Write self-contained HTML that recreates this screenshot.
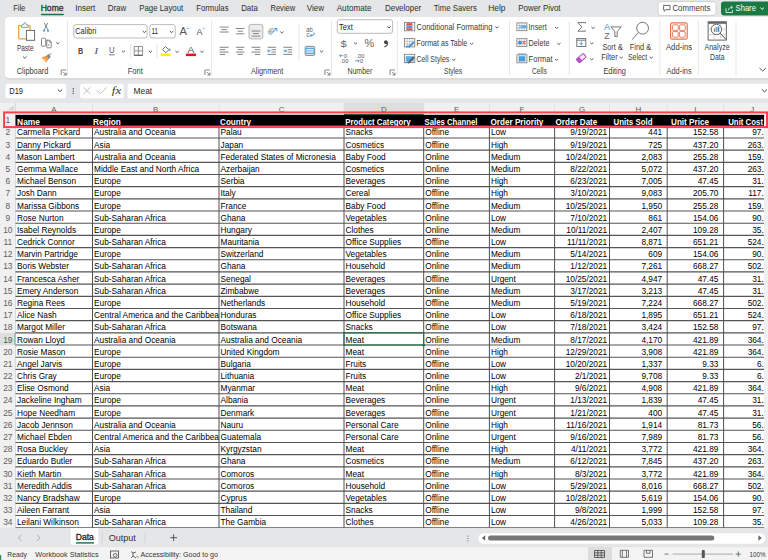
<!DOCTYPE html>
<html><head><meta charset="utf-8"><style>
html,body{margin:0;padding:0;width:768px;height:560px;overflow:hidden;background:#e5e6e8}
svg{display:block;font-family:"Liberation Sans", sans-serif}
</style></head><body>
<svg width="768" height="560" viewBox="0 0 768 560">
<rect x="0.00" y="0.00" width="768.00" height="560.00" fill="#e5e6e8"/>
<text x="13.20" y="10.90" font-size="8.4" fill="#2e2e2e" textLength="12.10" lengthAdjust="spacingAndGlyphs">File</text>
<text x="40.70" y="10.90" font-size="8.4" fill="#2e2e2e" textLength="22.85" lengthAdjust="spacingAndGlyphs" stroke="#333" stroke-width="0.3">Home</text>
<text x="75.20" y="10.90" font-size="8.4" fill="#2e2e2e" textLength="20.10" lengthAdjust="spacingAndGlyphs">Insert</text>
<text x="107.70" y="10.90" font-size="8.4" fill="#2e2e2e" textLength="18.60" lengthAdjust="spacingAndGlyphs">Draw</text>
<text x="139.20" y="10.90" font-size="8.4" fill="#2e2e2e" textLength="44.10" lengthAdjust="spacingAndGlyphs">Page Layout</text>
<text x="196.20" y="10.90" font-size="8.4" fill="#2e2e2e" textLength="32.35" lengthAdjust="spacingAndGlyphs">Formulas</text>
<text x="241.20" y="10.90" font-size="8.4" fill="#2e2e2e" textLength="16.60" lengthAdjust="spacingAndGlyphs">Data</text>
<text x="270.45" y="10.90" font-size="8.4" fill="#2e2e2e" textLength="24.85" lengthAdjust="spacingAndGlyphs">Review</text>
<text x="306.70" y="10.90" font-size="8.4" fill="#2e2e2e" textLength="17.35" lengthAdjust="spacingAndGlyphs">View</text>
<text x="336.70" y="10.90" font-size="8.4" fill="#2e2e2e" textLength="34.85" lengthAdjust="spacingAndGlyphs">Automate</text>
<text x="384.95" y="10.90" font-size="8.4" fill="#2e2e2e" textLength="36.35" lengthAdjust="spacingAndGlyphs">Developer</text>
<text x="433.70" y="10.90" font-size="8.4" fill="#2e2e2e" textLength="43.10" lengthAdjust="spacingAndGlyphs">Time Savers</text>
<text x="488.20" y="10.90" font-size="8.4" fill="#2e2e2e" textLength="17.35" lengthAdjust="spacingAndGlyphs">Help</text>
<text x="518.20" y="10.90" font-size="8.4" fill="#2e2e2e" textLength="42.35" lengthAdjust="spacingAndGlyphs">Power Pivot</text>
<rect x="40.80" y="13.70" width="23.10" height="1.50" fill="#1e7145" rx="0.7"/>
<rect x="658.00" y="1.50" width="58.00" height="14.00" fill="#ffffff" rx="3" stroke="#c9c9c9" stroke-width="0.8"/>
<text x="672.40" y="11.00" font-size="8.4" fill="#3b3b3b" textLength="38.00" lengthAdjust="spacingAndGlyphs">Comments</text>
<path d="M663.6 5.4h6.4v4.3h-4.2l-1.6 1.5v-1.5h-0.6z" fill="none" stroke="#444" stroke-width="0.8"/>
<rect x="721.00" y="1.50" width="52.00" height="14.00" fill="#1a7a43" rx="3"/>
<text x="735.60" y="11.00" font-size="8.4" fill="#ffffff" textLength="20.30" lengthAdjust="spacingAndGlyphs">Share</text>
<path d="M726 8.3v4.2h6.4v-2.6" fill="none" stroke="#fff" stroke-width="0.8"/><path d="M728.3 10.3c0.3-2 1.6-2.8 3.6-2.8M731 5.8l1.5 1.4-1.5 1.4" fill="none" stroke="#fff" stroke-width="0.8"/>
<path d="M760.4 7.6l1.8 1.7 1.8-1.7" fill="none" stroke="#fff" stroke-width="1"/>
<rect x="5.00" y="18.40" width="775.00" height="61.20" fill="#d2d2d2" rx="4"/>
<rect x="5.00" y="17.30" width="775.00" height="61.20" fill="#e1e1e1" rx="4"/>
<rect x="5.00" y="17.00" width="775.00" height="60.90" fill="#ffffff" rx="4"/>
<line x1="67.50" y1="21.00" x2="67.50" y2="75.50" stroke="#e1e1e1" stroke-width="0.8"/>
<line x1="211.60" y1="21.00" x2="211.60" y2="75.50" stroke="#e1e1e1" stroke-width="0.8"/>
<line x1="331.50" y1="21.00" x2="331.50" y2="75.50" stroke="#e1e1e1" stroke-width="0.8"/>
<line x1="397.40" y1="21.00" x2="397.40" y2="75.50" stroke="#e1e1e1" stroke-width="0.8"/>
<line x1="509.50" y1="21.00" x2="509.50" y2="75.50" stroke="#e1e1e1" stroke-width="0.8"/>
<line x1="569.20" y1="21.00" x2="569.20" y2="75.50" stroke="#e1e1e1" stroke-width="0.8"/>
<line x1="659.80" y1="21.00" x2="659.80" y2="75.50" stroke="#e1e1e1" stroke-width="0.8"/>
<line x1="698.30" y1="21.00" x2="698.30" y2="75.50" stroke="#e1e1e1" stroke-width="0.8"/>
<line x1="736.00" y1="21.00" x2="736.00" y2="75.50" stroke="#e1e1e1" stroke-width="0.8"/>
<text x="16.80" y="74.40" font-size="8.2" fill="#3b3b3b" textLength="31.50" lengthAdjust="spacingAndGlyphs">Clipboard</text>
<text x="127.70" y="74.40" font-size="8.2" fill="#3b3b3b" textLength="15.20" lengthAdjust="spacingAndGlyphs">Font</text>
<text x="251.00" y="74.40" font-size="8.2" fill="#3b3b3b" textLength="32.30" lengthAdjust="spacingAndGlyphs">Alignment</text>
<text x="347.45" y="74.40" font-size="8.2" fill="#3b3b3b" textLength="24.85" lengthAdjust="spacingAndGlyphs">Number</text>
<text x="444.00" y="74.40" font-size="8.2" fill="#3b3b3b" textLength="18.10" lengthAdjust="spacingAndGlyphs">Styles</text>
<text x="532.00" y="74.40" font-size="8.2" fill="#3b3b3b" textLength="14.80" lengthAdjust="spacingAndGlyphs">Cells</text>
<text x="603.40" y="74.40" font-size="8.2" fill="#3b3b3b" textLength="22.60" lengthAdjust="spacingAndGlyphs">Editing</text>
<text x="666.50" y="74.40" font-size="8.2" fill="#3b3b3b" textLength="25.10" lengthAdjust="spacingAndGlyphs">Add-ins</text>
<path d="M61.2 75V70h5M63.2 72l3 3M63.7 75h2.5v-2.5" fill="none" stroke="#555" stroke-width="0.7"/>
<path d="M204.9 75V70h5M206.9 72l3 3M207.4 75h2.5v-2.5" fill="none" stroke="#555" stroke-width="0.7"/>
<path d="M324.9 75V70h5M326.9 72l3 3M327.4 75h2.5v-2.5" fill="none" stroke="#555" stroke-width="0.7"/>
<path d="M390.0 75V70h5M392.0 72l3 3M392.5 75h2.5v-2.5" fill="none" stroke="#555" stroke-width="0.7"/>
<rect x="18.7" y="25.6" width="11.4" height="13.3" rx="0.8" fill="#fafafa" stroke="#f0a030" stroke-width="1.2"/>
<path d="M21.6 27.4v-1.6q0-1.3 1.3-1.3h0.7q0.2-2 1.3-2t1.3 2h0.7q1.3 0 1.3 1.3v1.6z" fill="#f2f2f2" stroke="#8a8a8a" stroke-width="0.8"/>
<rect x="26.4" y="30.4" width="8.2" height="9.9" fill="#ffffff" stroke="#5e5e5e" stroke-width="0.9"/>
<text x="16.90" y="50.60" font-size="8.7" fill="#3a3a3a" textLength="16.60" lengthAdjust="spacingAndGlyphs">Paste</text>
<path d="M23 56.6l1.8 1.7 1.8-1.7" fill="none" stroke="#505050" stroke-width="0.95"/>
<path d="M44.2 22.8l3.6 7M47.8 22.8l-3.6 7" stroke="#6a6a6a" stroke-width="0.8"/>
<circle cx="44.1" cy="30.7" r="1.15" fill="#4a9fe0"/><circle cx="48" cy="30.7" r="1.15" fill="#4a9fe0"/>
<rect x="41.5" y="38.2" width="4.2" height="8" rx="1" fill="none" stroke="#666" stroke-width="0.8"/>
<path d="M46.8 40.2h2.8l1.6 1.7v5.3q0 0.6-0.6 0.6h-3.2q-0.6 0-0.6-0.6v-6.4q0-0.6 0.6-0.6z" fill="#fff" stroke="#666" stroke-width="0.8"/><path d="M49.4 40.3v1.8h1.7" fill="none" stroke="#666" stroke-width="0.7"/><rect x="48" y="44.3" width="1.3" height="1.3" fill="#999"/>
<path d="M56.2 42.4l1.6 1.5 1.6-1.5" fill="none" stroke="#505050" stroke-width="0.95"/>
<path d="M41.4 57.8l5.2-2.2 1.6 3.6-1.8 3.4z" fill="#f29a36"/><path d="M43.5 58.5l2.8 2.2" stroke="#fff" stroke-width="0.7"/>
<path d="M46.6 55.6l2.5-1.8 1.6 3.5-2.5 1.9z" fill="#8a8a8a"/><path d="M49.7 54.6l1.6-1.2" stroke="#666" stroke-width="0.9"/>
<rect x="73.8" y="24.6" width="73.3" height="13.4" rx="2.2" fill="#fff" stroke="#a9a9a9" stroke-width="0.8"/>
<text x="75.20" y="34.10" font-size="8.3" fill="#1f1f1f" textLength="21.20" lengthAdjust="spacingAndGlyphs">Calibri</text>
<path d="M142.7 31l1.7 1.6 1.7-1.6" fill="none" stroke="#444" stroke-width="0.95"/>
<rect x="149.8" y="24.6" width="25.4" height="13.4" rx="2.2" fill="#fff" stroke="#a9a9a9" stroke-width="0.8"/>
<text x="151.50" y="34.10" font-size="8.3" fill="#1f1f1f" textLength="6.60" lengthAdjust="spacingAndGlyphs">11</text>
<path d="M169.9 31l1.7 1.6 1.7-1.6" fill="none" stroke="#444" stroke-width="0.95"/>
<text x="179.60" y="34.50" font-size="10.2" fill="#555" textLength="7.40" lengthAdjust="spacingAndGlyphs">A</text>
<path d="M186.8 29l1.1-1.1 1.1 1.1" fill="none" stroke="#4a9fe0" stroke-width="0.8"/>
<text x="196.50" y="34.50" font-size="8.5" fill="#555" textLength="6.00" lengthAdjust="spacingAndGlyphs">A</text>
<path d="M202.6 27.8l1.1 1.1 1.1-1.1" fill="none" stroke="#4a9fe0" stroke-width="0.8"/>
<text x="78.00" y="53.60" font-size="8.8" fill="#444" textLength="5.20" lengthAdjust="spacingAndGlyphs" font-weight="bold">B</text>
<text x="94.30" y="53.60" font-size="9" fill="#555" textLength="4.00" lengthAdjust="spacingAndGlyphs" font-family="Liberation Serif" font-style="italic">I</text>
<text x="109.00" y="53.10" font-size="8.2" fill="#555" textLength="5.60" lengthAdjust="spacingAndGlyphs">U</text>
<line x1="109.00" y1="54.80" x2="114.60" y2="54.80" stroke="#555" stroke-width="0.8"/>
<path d="M121.8 50.6l1.6 1.5 1.6-1.5" fill="none" stroke="#505050" stroke-width="0.95"/>
<line x1="130.60" y1="44.00" x2="130.60" y2="58.00" stroke="#dcdcdc" stroke-width="0.8"/>
<path d="M134.2 46.5h8.4v8.8h-8.4zM138.4 46.5v8.8M134.2 50.9h8.4" fill="none" stroke="#777" stroke-width="0.8"/><path d="M134.2 55.3h8.4" stroke="#555" stroke-width="1"/>
<path d="M148.8 50.8l1.6 1.5 1.6-1.5" fill="none" stroke="#505050" stroke-width="0.95"/>
<line x1="156.90" y1="44.00" x2="156.90" y2="58.00" stroke="#dcdcdc" stroke-width="0.8"/>
<path d="M162.5 49.5l3-3 3.3 3.3-3 3z" fill="none" stroke="#555" stroke-width="0.8"/><path d="M169.3 48.5q1 1.5 0.5 2.6" stroke="#2a7fd0" stroke-width="1" fill="none"/>
<rect x="160.80" y="53.60" width="10.10" height="2.50" fill="#fff200"/>
<path d="M175.5 51l1.6 1.5 1.6-1.5" fill="none" stroke="#505050" stroke-width="0.95"/>
<text x="187.60" y="52.90" font-size="9" fill="#555" textLength="6.80" lengthAdjust="spacingAndGlyphs">A</text>
<rect x="185.90" y="53.60" width="10.10" height="2.50" fill="#e81123"/>
<path d="M200.4 51l1.6 1.5 1.6-1.5" fill="none" stroke="#505050" stroke-width="0.95"/>
<line x1="219.70" y1="27.10" x2="228.60" y2="27.10" stroke="#777" stroke-width="0.9"/>
<line x1="221.30" y1="29.60" x2="227.00" y2="29.60" stroke="#777" stroke-width="0.9"/>
<line x1="219.70" y1="32.00" x2="228.60" y2="32.00" stroke="#777" stroke-width="0.9"/>
<line x1="235.90" y1="28.50" x2="244.40" y2="28.50" stroke="#777" stroke-width="0.9"/>
<line x1="237.50" y1="31.20" x2="242.80" y2="31.20" stroke="#777" stroke-width="0.9"/>
<line x1="235.90" y1="33.80" x2="244.40" y2="33.80" stroke="#777" stroke-width="0.9"/>
<rect x="249" y="24.4" width="13.8" height="14.5" rx="2.2" fill="#ececec" stroke="#a3a3a3" stroke-width="0.8"/>
<line x1="251.50" y1="31.00" x2="260.40" y2="31.00" stroke="#777" stroke-width="0.9"/>
<line x1="253.10" y1="33.50" x2="258.80" y2="33.50" stroke="#777" stroke-width="0.9"/>
<line x1="251.50" y1="36.10" x2="260.40" y2="36.10" stroke="#777" stroke-width="0.9"/>
<text x="267.20" y="33.00" font-size="6" fill="#666" transform="rotate(-35 270 31)">ab</text>
<path d="M270 35.3l6.8-6.8M274 28.5h2.8v2.8" fill="none" stroke="#3a8fd8" stroke-width="0.9"/>
<path d="M280.2 31.6l1.6 1.5 1.6-1.5" fill="none" stroke="#505050" stroke-width="0.95"/>
<line x1="219.70" y1="47.30" x2="228.60" y2="47.30" stroke="#777" stroke-width="0.9"/>
<line x1="219.70" y1="49.70" x2="225.22" y2="49.70" stroke="#777" stroke-width="0.9"/>
<line x1="219.70" y1="52.10" x2="228.60" y2="52.10" stroke="#777" stroke-width="0.9"/>
<line x1="219.70" y1="54.40" x2="225.22" y2="54.40" stroke="#777" stroke-width="0.9"/>
<line x1="235.90" y1="47.30" x2="244.40" y2="47.30" stroke="#777" stroke-width="0.9"/>
<line x1="237.50" y1="49.70" x2="242.80" y2="49.70" stroke="#777" stroke-width="0.9"/>
<line x1="235.90" y1="52.10" x2="244.40" y2="52.10" stroke="#777" stroke-width="0.9"/>
<line x1="237.50" y1="54.40" x2="242.80" y2="54.40" stroke="#777" stroke-width="0.9"/>
<line x1="251.50" y1="47.30" x2="260.30" y2="47.30" stroke="#777" stroke-width="0.9"/>
<line x1="254.84" y1="49.70" x2="260.30" y2="49.70" stroke="#777" stroke-width="0.9"/>
<line x1="251.50" y1="52.10" x2="260.30" y2="52.10" stroke="#777" stroke-width="0.9"/>
<line x1="254.84" y1="54.40" x2="260.30" y2="54.40" stroke="#777" stroke-width="0.9"/>
<line x1="267.60" y1="47.30" x2="276.00" y2="47.30" stroke="#777" stroke-width="0.9"/>
<line x1="271.50" y1="49.70" x2="276.00" y2="49.70" stroke="#777" stroke-width="0.9"/>
<line x1="271.50" y1="52.10" x2="276.00" y2="52.10" stroke="#777" stroke-width="0.9"/>
<line x1="267.60" y1="54.40" x2="276.00" y2="54.40" stroke="#777" stroke-width="0.9"/>
<path d="M267.6 50.9h3.2M269 49.4l-1.5 1.5 1.5 1.5" fill="none" stroke="#3a8fd8" stroke-width="0.9"/>
<line x1="283.30" y1="47.30" x2="292.10" y2="47.30" stroke="#777" stroke-width="0.9"/>
<line x1="287.60" y1="49.70" x2="292.10" y2="49.70" stroke="#777" stroke-width="0.9"/>
<line x1="287.60" y1="52.10" x2="292.10" y2="52.10" stroke="#777" stroke-width="0.9"/>
<line x1="283.30" y1="54.40" x2="292.10" y2="54.40" stroke="#777" stroke-width="0.9"/>
<path d="M283.3 50.9h3.2M285 49.4l1.5 1.5-1.5 1.5" fill="none" stroke="#3a8fd8" stroke-width="0.9"/>
<line x1="298.90" y1="24.00" x2="298.90" y2="61.00" stroke="#e1e1e1" stroke-width="0.8"/>
<text x="306.20" y="31.50" font-size="6.4" fill="#666" textLength="6.50" lengthAdjust="spacingAndGlyphs">ab</text>
<text x="306.40" y="36.60" font-size="6.4" fill="#666">c</text>
<path d="M314.3 32.5q0.5 3-2.2 3h-1.8M311.4 34.2l-1.3 1.3 1.3 1.3" fill="none" stroke="#3a8fd8" stroke-width="0.9"/>
<rect x="305.2" y="46.4" width="9.5" height="9" rx="1" fill="#fff" stroke="#666" stroke-width="0.8"/>
<rect x="305.60" y="47.60" width="8.70" height="6.60" fill="#5aaae6"/>
<rect x="306.60" y="49.20" width="6.70" height="3.40" fill="#ffffff"/>
<path d="M307.2 50.9h5.5" stroke="#3a8fd8" stroke-width="0.9"/>
<path d="M320 50.6l1.6 1.5 1.6-1.5" fill="none" stroke="#505050" stroke-width="0.95"/>
<rect x="337.2" y="19.7" width="55.4" height="13.6" rx="2.2" fill="#fff" stroke="#a9a9a9" stroke-width="0.8"/>
<text x="339.10" y="29.50" font-size="8.3" fill="#1f1f1f" textLength="13.60" lengthAdjust="spacingAndGlyphs">Text</text>
<path d="M387.3 26.4l1.7 1.6 1.7-1.6" fill="none" stroke="#444" stroke-width="0.95"/>
<text x="340.60" y="47.20" font-size="9.6" fill="#666" textLength="6.20" lengthAdjust="spacingAndGlyphs">$</text>
<path d="M354 42.5l1.6 1.5 1.6-1.5" fill="none" stroke="#505050" stroke-width="0.95"/>
<text x="364.60" y="47.20" font-size="10" fill="#666" textLength="9.70" lengthAdjust="spacingAndGlyphs">%</text>
<circle cx="385.9" cy="42.2" r="1.9" fill="#444"/><path d="M387.6 42.6q0.2 3-3.2 4.4" fill="none" stroke="#444" stroke-width="1.2"/>
<text x="344.00" y="57.70" font-size="5.6" fill="#555">0</text>
<text x="340.50" y="62.80" font-size="5.6" fill="#555">.00</text>
<path d="M339.5 55.7h4M341 54.3l-1.5 1.4 1.5 1.4" fill="none" stroke="#3a8fd8" stroke-width="0.8"/>
<text x="356.50" y="57.70" font-size="5.6" fill="#555">.00</text>
<text x="360.00" y="62.80" font-size="5.6" fill="#555">0</text>
<path d="M355 60.8h4.3M357.8 59.4l1.5 1.4-1.5 1.4" fill="none" stroke="#3a8fd8" stroke-width="0.8"/>
<rect x="404.5" y="22.5" width="10.3" height="8.3" fill="#fff" stroke="#777" stroke-width="0.8"/>
<line x1="404.50" y1="25.27" x2="414.80" y2="25.27" stroke="#aaa" stroke-width="0.6"/>
<line x1="404.50" y1="28.03" x2="414.80" y2="28.03" stroke="#aaa" stroke-width="0.6"/>
<line x1="407.07" y1="22.50" x2="407.07" y2="30.80" stroke="#aaa" stroke-width="0.6"/>
<line x1="409.65" y1="22.50" x2="409.65" y2="30.80" stroke="#aaa" stroke-width="0.6"/>
<line x1="412.23" y1="22.50" x2="412.23" y2="30.80" stroke="#aaa" stroke-width="0.6"/>
<rect x="406.50" y="23.20" width="5.60" height="2.20" fill="#e8454a"/>
<rect x="406.50" y="25.90" width="5.60" height="2.20" fill="#4a9fe0"/>
<rect x="406.50" y="28.40" width="5.60" height="1.80" fill="#e8454a"/>
<text x="416.50" y="29.60" font-size="8.8" fill="#3a3a3a" textLength="76.00" lengthAdjust="spacingAndGlyphs">Conditional Formatting</text>
<path d="M495.4 26.6l1.6 1.5 1.6-1.5" fill="none" stroke="#505050" stroke-width="0.95"/>
<rect x="404.5" y="38.6" width="10.3" height="8.3" fill="#fff" stroke="#777" stroke-width="0.8"/>
<line x1="404.50" y1="41.37" x2="414.80" y2="41.37" stroke="#aaa" stroke-width="0.6"/>
<line x1="404.50" y1="44.13" x2="414.80" y2="44.13" stroke="#aaa" stroke-width="0.6"/>
<line x1="407.07" y1="38.60" x2="407.07" y2="46.90" stroke="#aaa" stroke-width="0.6"/>
<line x1="409.65" y1="38.60" x2="409.65" y2="46.90" stroke="#aaa" stroke-width="0.6"/>
<line x1="412.23" y1="38.60" x2="412.23" y2="46.90" stroke="#aaa" stroke-width="0.6"/>
<path d="M408 46.8l5.5-5.5 1.2 1.2-5.5 5.5z" fill="#3a8fd8"/><path d="M406 47.2q1.5-0.2 2.5-1.5" stroke="#3a8fd8" stroke-width="1.2" fill="none"/>
<text x="416.50" y="45.90" font-size="8.8" fill="#3a3a3a" textLength="50.80" lengthAdjust="spacingAndGlyphs">Format as Table</text>
<path d="M470 43l1.6 1.5 1.6-1.5" fill="none" stroke="#505050" stroke-width="0.95"/>
<rect x="404.5" y="54.3" width="10.3" height="8.2" fill="#fff" stroke="#777" stroke-width="0.8"/>
<rect x="405.70" y="56.20" width="8.00" height="5.20" fill="#5aaae6"/>
<path d="M407.5 62.5l6-6 1.2 1.2-6 6z" fill="#555"/><path d="M405.5 63q1.6-0.2 2.5-1.5" stroke="#3a8fd8" stroke-width="1.2" fill="none"/>
<text x="416.50" y="61.50" font-size="8.8" fill="#3a3a3a" textLength="32.70" lengthAdjust="spacingAndGlyphs">Cell Styles</text>
<path d="M452.2 59l1.6 1.5 1.6-1.5" fill="none" stroke="#505050" stroke-width="0.95"/>
<rect x="516.9" y="22.9" width="10" height="7.8" fill="#fff" stroke="#777" stroke-width="0.8"/>
<line x1="516.90" y1="25.50" x2="526.90" y2="25.50" stroke="#aaa" stroke-width="0.6"/>
<line x1="516.90" y1="28.10" x2="526.90" y2="28.10" stroke="#aaa" stroke-width="0.6"/>
<line x1="519.40" y1="22.90" x2="519.40" y2="30.70" stroke="#aaa" stroke-width="0.6"/>
<line x1="521.90" y1="22.90" x2="521.90" y2="30.70" stroke="#aaa" stroke-width="0.6"/>
<line x1="524.40" y1="22.90" x2="524.40" y2="30.70" stroke="#aaa" stroke-width="0.6"/>
<rect x="518.00" y="25.50" width="8.80" height="2.60" fill="#5aaae6"/>
<path d="M517.5 26.8h4M519 25.4l-1.5 1.4 1.5 1.4" fill="none" stroke="#fff" stroke-width="0.7"/>
<text x="528.60" y="30.10" font-size="8.8" fill="#3a3a3a" textLength="18.20" lengthAdjust="spacingAndGlyphs">Insert</text>
<path d="M555 27l1.6 1.5 1.6-1.5" fill="none" stroke="#505050" stroke-width="0.95"/>
<rect x="516.9" y="38.7" width="10" height="7.8" fill="#fff" stroke="#777" stroke-width="0.8"/>
<line x1="516.90" y1="41.30" x2="526.90" y2="41.30" stroke="#aaa" stroke-width="0.6"/>
<line x1="516.90" y1="43.90" x2="526.90" y2="43.90" stroke="#aaa" stroke-width="0.6"/>
<line x1="519.40" y1="38.70" x2="519.40" y2="46.50" stroke="#aaa" stroke-width="0.6"/>
<line x1="521.90" y1="38.70" x2="521.90" y2="46.50" stroke="#aaa" stroke-width="0.6"/>
<line x1="524.40" y1="38.70" x2="524.40" y2="46.50" stroke="#aaa" stroke-width="0.6"/>
<circle cx="520" cy="42.6" r="1.9" fill="#3a8fd8"/><path d="M522.6 41l2.9 3.2M525.5 41l-2.9 3.2" stroke="#e8454a" stroke-width="0.9"/>
<text x="528.60" y="45.90" font-size="8.8" fill="#3a3a3a" textLength="20.90" lengthAdjust="spacingAndGlyphs">Delete</text>
<path d="M557.4 43l1.6 1.5 1.6-1.5" fill="none" stroke="#505050" stroke-width="0.95"/>
<rect x="516.9" y="54.8" width="10" height="8" fill="#fff" stroke="#777" stroke-width="0.8"/>
<line x1="516.90" y1="57.47" x2="526.90" y2="57.47" stroke="#aaa" stroke-width="0.6"/>
<line x1="516.90" y1="60.13" x2="526.90" y2="60.13" stroke="#aaa" stroke-width="0.6"/>
<line x1="519.40" y1="54.80" x2="519.40" y2="62.80" stroke="#aaa" stroke-width="0.6"/>
<line x1="521.90" y1="54.80" x2="521.90" y2="62.80" stroke="#aaa" stroke-width="0.6"/>
<line x1="524.40" y1="54.80" x2="524.40" y2="62.80" stroke="#aaa" stroke-width="0.6"/>
<rect x="518.80" y="56.20" width="6.40" height="5.20" fill="#4a9fe0"/>
<line x1="518.00" y1="54.00" x2="526.00" y2="54.00" stroke="#3a8fd8" stroke-width="0.8"/>
<text x="528.60" y="61.50" font-size="8.8" fill="#3a3a3a" textLength="23.90" lengthAdjust="spacingAndGlyphs">Format</text>
<path d="M555 59l1.6 1.5 1.6-1.5" fill="none" stroke="#505050" stroke-width="0.95"/>
<path d="M585.5 23.5v-0.9h-7.6l4 4.3-4 4.3h7.6v-0.9" fill="none" stroke="#666" stroke-width="0.9"/>
<path d="M591.4 27l1.6 1.5 1.6-1.5" fill="none" stroke="#505050" stroke-width="0.95"/>
<rect x="576.8" y="38.6" width="9" height="7.8" fill="#fff" stroke="#666" stroke-width="0.9"/><path d="M576.8 40.2h9" stroke="#666" stroke-width="0.9"/>
<path d="M581.3 41.3v3.4M579.7 43.2l1.6 1.6 1.6-1.6" fill="none" stroke="#3a8fd8" stroke-width="0.9"/>
<path d="M590.2 42.5l1.6 1.5 1.6-1.5" fill="none" stroke="#505050" stroke-width="0.95"/>
<g transform="rotate(-40 581.3 58.1)"><rect x="576.6" y="55.7" width="9.4" height="4.8" rx="1.1" fill="#f6e6f9" stroke="#b14fc5" stroke-width="1"/><rect x="576.6" y="55.7" width="3.8" height="4.8" rx="1.1" fill="#b14fc5"/></g>
<path d="M590.2 58.4l1.6 1.5 1.6-1.5" fill="none" stroke="#505050" stroke-width="0.95"/>
<text x="604.10" y="29.80" font-size="9" fill="#3a8fd8" textLength="6.00" lengthAdjust="spacingAndGlyphs">A</text>
<text x="604.30" y="38.80" font-size="9" fill="#666" textLength="5.40" lengthAdjust="spacingAndGlyphs">Z</text>
<path d="M610.9 26.9h10.3l-4 4.8v4.8h-2.3v-4.8z" fill="none" stroke="#666" stroke-width="0.9"/>
<text x="602.40" y="49.90" font-size="8.3" fill="#3a3a3a" textLength="20.40" lengthAdjust="spacingAndGlyphs">Sort &amp;</text>
<text x="601.20" y="59.60" font-size="8.3" fill="#3a3a3a" textLength="16.50" lengthAdjust="spacingAndGlyphs">Filter</text>
<path d="M619.6 56.8l1.6 1.5 1.6-1.5" fill="none" stroke="#505050" stroke-width="0.95"/>
<circle cx="642.6" cy="28.2" r="5.9" fill="none" stroke="#666" stroke-width="0.9"/><path d="M638.4 32.4l-6.2 7.3" stroke="#666" stroke-width="0.9"/>
<text x="629.80" y="49.90" font-size="8.3" fill="#3a3a3a" textLength="21.40" lengthAdjust="spacingAndGlyphs">Find &amp;</text>
<text x="627.90" y="59.60" font-size="8.3" fill="#3a3a3a" textLength="19.30" lengthAdjust="spacingAndGlyphs">Select</text>
<path d="M649.6 56.8l1.6 1.5 1.6-1.5" fill="none" stroke="#505050" stroke-width="0.95"/>
<rect x="670.6" y="22.8" width="16.6" height="16.4" rx="1.8" fill="#fff" stroke="#e8734f" stroke-width="1.2"/>
<rect x="672.6" y="24.8" width="5.6" height="5.6" rx="0.6" fill="#fff" stroke="#e8734f" stroke-width="0.9"/>
<rect x="679.6" y="24.8" width="5.6" height="5.6" rx="0.6" fill="#fff" stroke="#e8734f" stroke-width="0.9"/>
<rect x="672.6" y="31.6" width="5.6" height="5.6" rx="0.6" fill="#fff" stroke="#e8734f" stroke-width="0.9"/>
<rect x="679.6" y="31.6" width="5.6" height="5.6" rx="0.6" fill="#fff" stroke="#e8734f" stroke-width="0.9"/>
<text x="666.00" y="49.70" font-size="8.3" fill="#3a3a3a" textLength="26.00" lengthAdjust="spacingAndGlyphs">Add-ins</text>
<rect x="708.1" y="21.8" width="18.2" height="18.3" fill="#fff" stroke="#555" stroke-width="0.9"/>
<rect x="708.10" y="21.80" width="18.20" height="2.00" fill="#666"/>
<line x1="714.20" y1="24.00" x2="714.20" y2="40.00" stroke="#bbb" stroke-width="0.6"/>
<line x1="720.30" y1="24.00" x2="720.30" y2="40.00" stroke="#bbb" stroke-width="0.6"/>
<line x1="708.00" y1="29.00" x2="726.30" y2="29.00" stroke="#bbb" stroke-width="0.6"/>
<line x1="708.00" y1="34.50" x2="726.30" y2="34.50" stroke="#bbb" stroke-width="0.6"/>
<circle cx="716.4" cy="29.4" r="5.2" fill="#fff" stroke="#555" stroke-width="0.9"/><path d="M720.2 33.2l6 6.4" stroke="#555" stroke-width="1"/>
<rect x="713.80" y="28.50" width="1.20" height="3.40" fill="#888"/>
<rect x="715.60" y="27.00" width="1.20" height="4.90" fill="#888"/>
<rect x="717.50" y="26.50" width="1.80" height="5.40" fill="#3a8fd8"/>
<text x="704.40" y="49.70" font-size="8.3" fill="#3a3a3a" textLength="25.40" lengthAdjust="spacingAndGlyphs">Analyze</text>
<text x="710.00" y="60.10" font-size="8.3" fill="#3a3a3a" textLength="14.50" lengthAdjust="spacingAndGlyphs">Data</text>
<path d="M759.5 68l3.2 3 3.2-3" fill="none" stroke="#444" stroke-width="0.9"/>
<rect x="5.50" y="83.80" width="60.75" height="14.40" fill="#ffffff" rx="2.5"/>
<text x="9.20" y="93.80" font-size="8.3" fill="#1f1f1f" textLength="13.90" lengthAdjust="spacingAndGlyphs">D19</text>
<path d="M57.8 89.5l2.2 2.1 2.2-2.1" fill="none" stroke="#444" stroke-width="1"/>
<rect x="72.70" y="88.10" width="1.20" height="1.20" fill="#4a4a4a"/>
<rect x="72.70" y="90.50" width="1.20" height="1.20" fill="#4a4a4a"/>
<rect x="72.70" y="92.90" width="1.20" height="1.20" fill="#4a4a4a"/>
<rect x="80.00" y="83.80" width="43.75" height="14.40" fill="#ffffff" rx="2.5"/>
<path d="M83.4 87.3l7.2 6.8M90.6 87.3l-7.2 6.8" stroke="#b0b0b0" stroke-width="0.8"/>
<path d="M97 90.3l3.4 3.4 6.2-6.3" fill="none" stroke="#b0b0b0" stroke-width="0.8"/>
<text x="111.80" y="93.60" font-size="10.5" fill="#3a3a3a" textLength="9.40" lengthAdjust="spacingAndGlyphs" font-family="Liberation Serif" font-style="italic">fx</text>
<rect x="127.50" y="83.80" width="650.00" height="14.40" fill="#ffffff" rx="2.5"/>
<text x="133.60" y="93.80" font-size="8.3" fill="#1f1f1f" textLength="18.60" lengthAdjust="spacingAndGlyphs">Meat</text>
<path d="M762 89.5l2.5 2.4 2.5-2.4" fill="none" stroke="#444" stroke-width="1"/>
<rect x="0.00" y="103.00" width="764.20" height="11.00" fill="#f0f0f0"/>
<rect x="0.00" y="103.00" width="15.50" height="424.72" fill="#f0f0f0"/>
<rect x="15.50" y="113.60" width="748.70" height="414.12" fill="#ffffff"/>
<rect x="344.00" y="103.00" width="79.70" height="10.60" fill="#dedede"/>
<line x1="344.00" y1="114.40" x2="423.70" y2="114.40" stroke="#217346" stroke-width="1.2"/>
<rect x="0.00" y="332.84" width="15.50" height="12.18" fill="#dedede"/>
<line x1="15.30" y1="332.84" x2="15.30" y2="345.02" stroke="#217346" stroke-width="1.2"/>
<path d="M13.7 105.4V110.3H7.4z" fill="#d3d3d3"/>
<line x1="92.50" y1="104.00" x2="92.50" y2="113.60" stroke="#dadada" stroke-width="0.7"/>
<line x1="219.00" y1="104.00" x2="219.00" y2="113.60" stroke="#dadada" stroke-width="0.7"/>
<line x1="344.00" y1="104.00" x2="344.00" y2="113.60" stroke="#dadada" stroke-width="0.7"/>
<line x1="423.70" y1="104.00" x2="423.70" y2="113.60" stroke="#dadada" stroke-width="0.7"/>
<line x1="489.40" y1="104.00" x2="489.40" y2="113.60" stroke="#dadada" stroke-width="0.7"/>
<line x1="554.60" y1="104.00" x2="554.60" y2="113.60" stroke="#dadada" stroke-width="0.7"/>
<line x1="609.50" y1="104.00" x2="609.50" y2="113.60" stroke="#dadada" stroke-width="0.7"/>
<line x1="667.20" y1="104.00" x2="667.20" y2="113.60" stroke="#dadada" stroke-width="0.7"/>
<line x1="723.60" y1="104.00" x2="723.60" y2="113.60" stroke="#dadada" stroke-width="0.7"/>
<line x1="15.50" y1="103.00" x2="15.50" y2="527.72" stroke="#d4d4d4" stroke-width="0.8"/>
<text x="54.00" y="112.30" font-size="7.9" fill="#5a5a5a" text-anchor="middle">A</text>
<text x="155.75" y="112.30" font-size="7.9" fill="#5a5a5a" text-anchor="middle">B</text>
<text x="281.50" y="112.30" font-size="7.9" fill="#5a5a5a" text-anchor="middle">C</text>
<text x="383.85" y="112.30" font-size="7.9" fill="#1e7145" text-anchor="middle">D</text>
<text x="456.55" y="112.30" font-size="7.9" fill="#5a5a5a" text-anchor="middle">E</text>
<text x="522.00" y="112.30" font-size="7.9" fill="#5a5a5a" text-anchor="middle">F</text>
<text x="582.05" y="112.30" font-size="7.9" fill="#5a5a5a" text-anchor="middle">G</text>
<text x="638.35" y="112.30" font-size="7.9" fill="#5a5a5a" text-anchor="middle">H</text>
<text x="695.40" y="112.30" font-size="7.9" fill="#5a5a5a" text-anchor="middle">I</text>
<text x="752.30" y="112.30" font-size="7.9" fill="#5a5a5a" text-anchor="middle">J</text>
<text x="7.80" y="123.28" font-size="8.4" fill="#606060" text-anchor="middle">1</text>
<text x="7.80" y="135.46" font-size="8.4" fill="#606060" text-anchor="middle">2</text>
<text x="7.80" y="147.64" font-size="8.4" fill="#606060" text-anchor="middle">3</text>
<text x="7.80" y="159.82" font-size="8.4" fill="#606060" text-anchor="middle">4</text>
<text x="7.80" y="172.00" font-size="8.4" fill="#606060" text-anchor="middle">5</text>
<text x="7.80" y="184.18" font-size="8.4" fill="#606060" text-anchor="middle">6</text>
<text x="7.80" y="196.36" font-size="8.4" fill="#606060" text-anchor="middle">7</text>
<text x="7.80" y="208.54" font-size="8.4" fill="#606060" text-anchor="middle">8</text>
<text x="7.80" y="220.72" font-size="8.4" fill="#606060" text-anchor="middle">9</text>
<text x="7.80" y="232.90" font-size="8.4" fill="#606060" text-anchor="middle">10</text>
<text x="7.80" y="245.08" font-size="8.4" fill="#606060" text-anchor="middle">11</text>
<text x="7.80" y="257.26" font-size="8.4" fill="#606060" text-anchor="middle">12</text>
<text x="7.80" y="269.44" font-size="8.4" fill="#606060" text-anchor="middle">13</text>
<text x="7.80" y="281.62" font-size="8.4" fill="#606060" text-anchor="middle">14</text>
<text x="7.80" y="293.80" font-size="8.4" fill="#606060" text-anchor="middle">15</text>
<text x="7.80" y="305.98" font-size="8.4" fill="#606060" text-anchor="middle">16</text>
<text x="7.80" y="318.16" font-size="8.4" fill="#606060" text-anchor="middle">17</text>
<text x="7.80" y="330.34" font-size="8.4" fill="#606060" text-anchor="middle">18</text>
<text x="7.80" y="342.52" font-size="8.4" fill="#1e7145" text-anchor="middle">19</text>
<text x="7.80" y="354.70" font-size="8.4" fill="#606060" text-anchor="middle">20</text>
<text x="7.80" y="366.88" font-size="8.4" fill="#606060" text-anchor="middle">21</text>
<text x="7.80" y="379.06" font-size="8.4" fill="#606060" text-anchor="middle">22</text>
<text x="7.80" y="391.24" font-size="8.4" fill="#606060" text-anchor="middle">23</text>
<text x="7.80" y="403.42" font-size="8.4" fill="#606060" text-anchor="middle">24</text>
<text x="7.80" y="415.60" font-size="8.4" fill="#606060" text-anchor="middle">25</text>
<text x="7.80" y="427.78" font-size="8.4" fill="#606060" text-anchor="middle">26</text>
<text x="7.80" y="439.96" font-size="8.4" fill="#606060" text-anchor="middle">27</text>
<text x="7.80" y="452.14" font-size="8.4" fill="#606060" text-anchor="middle">28</text>
<text x="7.80" y="464.32" font-size="8.4" fill="#606060" text-anchor="middle">29</text>
<text x="7.80" y="476.50" font-size="8.4" fill="#606060" text-anchor="middle">30</text>
<text x="7.80" y="488.68" font-size="8.4" fill="#606060" text-anchor="middle">31</text>
<text x="7.80" y="500.86" font-size="8.4" fill="#606060" text-anchor="middle">32</text>
<text x="7.80" y="513.04" font-size="8.4" fill="#606060" text-anchor="middle">33</text>
<text x="7.80" y="525.22" font-size="8.4" fill="#606060" text-anchor="middle">34</text>
<rect x="15.50" y="114.80" width="748.70" height="10.98" fill="#000000"/>
<defs>
<clipPath id="c0"><rect x="15.5" y="100" width="77.0" height="430"/></clipPath>
<clipPath id="c1"><rect x="92.5" y="100" width="126.5" height="430"/></clipPath>
<clipPath id="c2"><rect x="219.0" y="100" width="125.0" height="430"/></clipPath>
<clipPath id="c3"><rect x="344.0" y="100" width="79.69999999999999" height="430"/></clipPath>
<clipPath id="c4"><rect x="423.7" y="100" width="65.69999999999999" height="430"/></clipPath>
<clipPath id="c5"><rect x="489.4" y="100" width="65.20000000000005" height="430"/></clipPath>
<clipPath id="c6"><rect x="554.6" y="100" width="54.89999999999998" height="430"/></clipPath>
<clipPath id="c7"><rect x="609.5" y="100" width="57.700000000000045" height="430"/></clipPath>
<clipPath id="c8"><rect x="667.2" y="100" width="56.39999999999998" height="430"/></clipPath>
<clipPath id="c9"><rect x="723.6" y="100" width="40.60000000000002" height="430"/></clipPath>
</defs>
<line x1="15.50" y1="137.96" x2="764.20" y2="137.96" stroke="#555555" stroke-width="1.15"/>
<line x1="15.50" y1="150.14" x2="764.20" y2="150.14" stroke="#555555" stroke-width="1.15"/>
<line x1="15.50" y1="162.32" x2="764.20" y2="162.32" stroke="#555555" stroke-width="1.15"/>
<line x1="15.50" y1="174.50" x2="764.20" y2="174.50" stroke="#555555" stroke-width="1.15"/>
<line x1="15.50" y1="186.68" x2="764.20" y2="186.68" stroke="#555555" stroke-width="1.15"/>
<line x1="15.50" y1="198.86" x2="764.20" y2="198.86" stroke="#555555" stroke-width="1.15"/>
<line x1="15.50" y1="211.04" x2="764.20" y2="211.04" stroke="#555555" stroke-width="1.15"/>
<line x1="15.50" y1="223.22" x2="764.20" y2="223.22" stroke="#555555" stroke-width="1.15"/>
<line x1="15.50" y1="235.40" x2="764.20" y2="235.40" stroke="#555555" stroke-width="1.15"/>
<line x1="15.50" y1="247.58" x2="764.20" y2="247.58" stroke="#555555" stroke-width="1.15"/>
<line x1="15.50" y1="259.76" x2="764.20" y2="259.76" stroke="#555555" stroke-width="1.15"/>
<line x1="15.50" y1="271.94" x2="764.20" y2="271.94" stroke="#555555" stroke-width="1.15"/>
<line x1="15.50" y1="284.12" x2="764.20" y2="284.12" stroke="#555555" stroke-width="1.15"/>
<line x1="15.50" y1="296.30" x2="764.20" y2="296.30" stroke="#555555" stroke-width="1.15"/>
<line x1="15.50" y1="308.48" x2="764.20" y2="308.48" stroke="#555555" stroke-width="1.15"/>
<line x1="15.50" y1="320.66" x2="764.20" y2="320.66" stroke="#555555" stroke-width="1.15"/>
<line x1="15.50" y1="332.84" x2="764.20" y2="332.84" stroke="#555555" stroke-width="1.15"/>
<line x1="15.50" y1="345.02" x2="764.20" y2="345.02" stroke="#555555" stroke-width="1.15"/>
<line x1="15.50" y1="357.20" x2="764.20" y2="357.20" stroke="#555555" stroke-width="1.15"/>
<line x1="15.50" y1="369.38" x2="764.20" y2="369.38" stroke="#555555" stroke-width="1.15"/>
<line x1="15.50" y1="381.56" x2="764.20" y2="381.56" stroke="#555555" stroke-width="1.15"/>
<line x1="15.50" y1="393.74" x2="764.20" y2="393.74" stroke="#555555" stroke-width="1.15"/>
<line x1="15.50" y1="405.92" x2="764.20" y2="405.92" stroke="#555555" stroke-width="1.15"/>
<line x1="15.50" y1="418.10" x2="764.20" y2="418.10" stroke="#555555" stroke-width="1.15"/>
<line x1="15.50" y1="430.28" x2="764.20" y2="430.28" stroke="#555555" stroke-width="1.15"/>
<line x1="15.50" y1="442.46" x2="764.20" y2="442.46" stroke="#555555" stroke-width="1.15"/>
<line x1="15.50" y1="454.64" x2="764.20" y2="454.64" stroke="#555555" stroke-width="1.15"/>
<line x1="15.50" y1="466.82" x2="764.20" y2="466.82" stroke="#555555" stroke-width="1.15"/>
<line x1="15.50" y1="479.00" x2="764.20" y2="479.00" stroke="#555555" stroke-width="1.15"/>
<line x1="15.50" y1="491.18" x2="764.20" y2="491.18" stroke="#555555" stroke-width="1.15"/>
<line x1="15.50" y1="503.36" x2="764.20" y2="503.36" stroke="#555555" stroke-width="1.15"/>
<line x1="15.50" y1="515.54" x2="764.20" y2="515.54" stroke="#555555" stroke-width="1.15"/>
<line x1="15.50" y1="527.92" x2="764.20" y2="527.92" stroke="#5a5a5a" stroke-width="1.3"/>
<line x1="92.50" y1="125.78" x2="92.50" y2="527.72" stroke="#505050" stroke-width="1"/>
<line x1="219.00" y1="125.78" x2="219.00" y2="527.72" stroke="#505050" stroke-width="1"/>
<line x1="344.00" y1="125.78" x2="344.00" y2="527.72" stroke="#505050" stroke-width="1"/>
<line x1="423.70" y1="125.78" x2="423.70" y2="527.72" stroke="#505050" stroke-width="1"/>
<line x1="489.40" y1="125.78" x2="489.40" y2="527.72" stroke="#505050" stroke-width="1"/>
<line x1="554.60" y1="125.78" x2="554.60" y2="527.72" stroke="#505050" stroke-width="1"/>
<line x1="609.50" y1="125.78" x2="609.50" y2="527.72" stroke="#505050" stroke-width="1"/>
<line x1="667.20" y1="125.78" x2="667.20" y2="527.72" stroke="#505050" stroke-width="1"/>
<line x1="723.60" y1="125.78" x2="723.60" y2="527.72" stroke="#505050" stroke-width="1"/>
<g clip-path="url(#c0)">
<text x="17.10" y="124.88" font-size="8.3" fill="#ffffff" textLength="22.90" lengthAdjust="spacingAndGlyphs" font-weight="bold">Name</text>
</g>
<g clip-path="url(#c1)">
<text x="93.00" y="124.88" font-size="8.3" fill="#ffffff" textLength="27.90" lengthAdjust="spacingAndGlyphs" font-weight="bold">Region</text>
</g>
<g clip-path="url(#c2)">
<text x="220.10" y="124.88" font-size="8.3" fill="#ffffff" textLength="31.00" lengthAdjust="spacingAndGlyphs" font-weight="bold">Country</text>
</g>
<g clip-path="url(#c3)">
<text x="345.20" y="124.88" font-size="8.3" fill="#ffffff" textLength="65.50" lengthAdjust="spacingAndGlyphs" font-weight="bold">Product Category</text>
</g>
<g clip-path="url(#c4)">
<text x="424.60" y="124.88" font-size="8.3" fill="#ffffff" textLength="52.90" lengthAdjust="spacingAndGlyphs" font-weight="bold">Sales Channel</text>
</g>
<g clip-path="url(#c5)">
<text x="490.50" y="124.88" font-size="8.3" fill="#ffffff" textLength="52.90" lengthAdjust="spacingAndGlyphs" font-weight="bold">Order Priority</text>
</g>
<g clip-path="url(#c6)">
<text x="555.60" y="124.88" font-size="8.3" fill="#ffffff" textLength="41.70" lengthAdjust="spacingAndGlyphs" font-weight="bold">Order Date</text>
</g>
<g clip-path="url(#c7)">
<text x="613.50" y="124.88" font-size="8.3" fill="#ffffff" textLength="39.00" lengthAdjust="spacingAndGlyphs" font-weight="bold">Units Sold</text>
</g>
<g clip-path="url(#c8)">
<text x="671.00" y="124.88" font-size="8.3" fill="#ffffff" textLength="38.00" lengthAdjust="spacingAndGlyphs" font-weight="bold">Unit Price</text>
</g>
<g clip-path="url(#c9)">
<text x="728.20" y="124.88" font-size="8.3" fill="#ffffff" textLength="34.80" lengthAdjust="spacingAndGlyphs" font-weight="bold">Unit Cost</text>
</g>
<g clip-path="url(#c0)">
<text x="17.00" y="135.46" font-size="8.3">Carmella Pickard</text>
</g>
<g clip-path="url(#c1)">
<text x="94.00" y="135.46" font-size="8.3">Australia and Oceania</text>
</g>
<g clip-path="url(#c2)">
<text x="220.50" y="135.46" font-size="8.3">Palau</text>
</g>
<g clip-path="url(#c3)">
<text x="345.50" y="135.46" font-size="8.3">Snacks</text>
</g>
<g clip-path="url(#c4)">
<text x="425.20" y="135.46" font-size="8.3">Offline</text>
</g>
<g clip-path="url(#c5)">
<text x="490.90" y="135.46" font-size="8.3">Low</text>
</g>
<text x="607.20" y="135.46" font-size="8.3" text-anchor="end">9/19/2021</text>
<text x="662.20" y="135.46" font-size="8.3" text-anchor="end">441</text>
<text x="718.40" y="135.46" font-size="8.3" text-anchor="end">152.58</text>
<text x="763.80" y="135.46" font-size="8.3" text-anchor="end">97.</text>
<g clip-path="url(#c0)">
<text x="17.00" y="147.64" font-size="8.3">Danny Pickard</text>
</g>
<g clip-path="url(#c1)">
<text x="94.00" y="147.64" font-size="8.3">Asia</text>
</g>
<g clip-path="url(#c2)">
<text x="220.50" y="147.64" font-size="8.3">Japan</text>
</g>
<g clip-path="url(#c3)">
<text x="345.50" y="147.64" font-size="8.3">Cosmetics</text>
</g>
<g clip-path="url(#c4)">
<text x="425.20" y="147.64" font-size="8.3">Offline</text>
</g>
<g clip-path="url(#c5)">
<text x="490.90" y="147.64" font-size="8.3">High</text>
</g>
<text x="607.20" y="147.64" font-size="8.3" text-anchor="end">9/19/2021</text>
<text x="662.20" y="147.64" font-size="8.3" text-anchor="end">725</text>
<text x="718.40" y="147.64" font-size="8.3" text-anchor="end">437.20</text>
<text x="763.80" y="147.64" font-size="8.3" text-anchor="end">263.</text>
<g clip-path="url(#c0)">
<text x="17.00" y="159.82" font-size="8.3">Mason Lambert</text>
</g>
<g clip-path="url(#c1)">
<text x="94.00" y="159.82" font-size="8.3">Australia and Oceania</text>
</g>
<g clip-path="url(#c2)">
<text x="220.50" y="159.82" font-size="8.3">Federated States of Micronesia</text>
</g>
<g clip-path="url(#c3)">
<text x="345.50" y="159.82" font-size="8.3">Baby Food</text>
</g>
<g clip-path="url(#c4)">
<text x="425.20" y="159.82" font-size="8.3">Online</text>
</g>
<g clip-path="url(#c5)">
<text x="490.90" y="159.82" font-size="8.3">Medium</text>
</g>
<text x="607.20" y="159.82" font-size="8.3" text-anchor="end">10/24/2021</text>
<text x="662.20" y="159.82" font-size="8.3" text-anchor="end">2,083</text>
<text x="718.40" y="159.82" font-size="8.3" text-anchor="end">255.28</text>
<text x="763.80" y="159.82" font-size="8.3" text-anchor="end">159.</text>
<g clip-path="url(#c0)">
<text x="17.00" y="172.00" font-size="8.3">Gemma Wallace</text>
</g>
<g clip-path="url(#c1)">
<text x="94.00" y="172.00" font-size="8.3">Middle East and North Africa</text>
</g>
<g clip-path="url(#c2)">
<text x="220.50" y="172.00" font-size="8.3">Azerbaijan</text>
</g>
<g clip-path="url(#c3)">
<text x="345.50" y="172.00" font-size="8.3">Cosmetics</text>
</g>
<g clip-path="url(#c4)">
<text x="425.20" y="172.00" font-size="8.3">Online</text>
</g>
<g clip-path="url(#c5)">
<text x="490.90" y="172.00" font-size="8.3">Medium</text>
</g>
<text x="607.20" y="172.00" font-size="8.3" text-anchor="end">8/22/2021</text>
<text x="662.20" y="172.00" font-size="8.3" text-anchor="end">5,072</text>
<text x="718.40" y="172.00" font-size="8.3" text-anchor="end">437.20</text>
<text x="763.80" y="172.00" font-size="8.3" text-anchor="end">263.</text>
<g clip-path="url(#c0)">
<text x="17.00" y="184.18" font-size="8.3">Michael Benson</text>
</g>
<g clip-path="url(#c1)">
<text x="94.00" y="184.18" font-size="8.3">Europe</text>
</g>
<g clip-path="url(#c2)">
<text x="220.50" y="184.18" font-size="8.3">Serbia</text>
</g>
<g clip-path="url(#c3)">
<text x="345.50" y="184.18" font-size="8.3">Beverages</text>
</g>
<g clip-path="url(#c4)">
<text x="425.20" y="184.18" font-size="8.3">Online</text>
</g>
<g clip-path="url(#c5)">
<text x="490.90" y="184.18" font-size="8.3">High</text>
</g>
<text x="607.20" y="184.18" font-size="8.3" text-anchor="end">6/23/2021</text>
<text x="662.20" y="184.18" font-size="8.3" text-anchor="end">7,005</text>
<text x="718.40" y="184.18" font-size="8.3" text-anchor="end">47.45</text>
<text x="763.80" y="184.18" font-size="8.3" text-anchor="end">31.</text>
<g clip-path="url(#c0)">
<text x="17.00" y="196.36" font-size="8.3">Josh Dann</text>
</g>
<g clip-path="url(#c1)">
<text x="94.00" y="196.36" font-size="8.3">Europe</text>
</g>
<g clip-path="url(#c2)">
<text x="220.50" y="196.36" font-size="8.3">Italy</text>
</g>
<g clip-path="url(#c3)">
<text x="345.50" y="196.36" font-size="8.3">Cereal</text>
</g>
<g clip-path="url(#c4)">
<text x="425.20" y="196.36" font-size="8.3">Offline</text>
</g>
<g clip-path="url(#c5)">
<text x="490.90" y="196.36" font-size="8.3">High</text>
</g>
<text x="607.20" y="196.36" font-size="8.3" text-anchor="end">3/10/2021</text>
<text x="662.20" y="196.36" font-size="8.3" text-anchor="end">9,083</text>
<text x="718.40" y="196.36" font-size="8.3" text-anchor="end">205.70</text>
<text x="763.80" y="196.36" font-size="8.3" text-anchor="end">117.</text>
<g clip-path="url(#c0)">
<text x="17.00" y="208.54" font-size="8.3">Marissa Gibbons</text>
</g>
<g clip-path="url(#c1)">
<text x="94.00" y="208.54" font-size="8.3">Europe</text>
</g>
<g clip-path="url(#c2)">
<text x="220.50" y="208.54" font-size="8.3">France</text>
</g>
<g clip-path="url(#c3)">
<text x="345.50" y="208.54" font-size="8.3">Baby Food</text>
</g>
<g clip-path="url(#c4)">
<text x="425.20" y="208.54" font-size="8.3">Offline</text>
</g>
<g clip-path="url(#c5)">
<text x="490.90" y="208.54" font-size="8.3">Medium</text>
</g>
<text x="607.20" y="208.54" font-size="8.3" text-anchor="end">10/25/2021</text>
<text x="662.20" y="208.54" font-size="8.3" text-anchor="end">1,950</text>
<text x="718.40" y="208.54" font-size="8.3" text-anchor="end">255.28</text>
<text x="763.80" y="208.54" font-size="8.3" text-anchor="end">159.</text>
<g clip-path="url(#c0)">
<text x="17.00" y="220.72" font-size="8.3">Rose Nurton</text>
</g>
<g clip-path="url(#c1)">
<text x="94.00" y="220.72" font-size="8.3">Sub-Saharan Africa</text>
</g>
<g clip-path="url(#c2)">
<text x="220.50" y="220.72" font-size="8.3">Ghana</text>
</g>
<g clip-path="url(#c3)">
<text x="345.50" y="220.72" font-size="8.3">Vegetables</text>
</g>
<g clip-path="url(#c4)">
<text x="425.20" y="220.72" font-size="8.3">Online</text>
</g>
<g clip-path="url(#c5)">
<text x="490.90" y="220.72" font-size="8.3">Low</text>
</g>
<text x="607.20" y="220.72" font-size="8.3" text-anchor="end">7/10/2021</text>
<text x="662.20" y="220.72" font-size="8.3" text-anchor="end">861</text>
<text x="718.40" y="220.72" font-size="8.3" text-anchor="end">154.06</text>
<text x="763.80" y="220.72" font-size="8.3" text-anchor="end">90.</text>
<g clip-path="url(#c0)">
<text x="17.00" y="232.90" font-size="8.3">Isabel Reynolds</text>
</g>
<g clip-path="url(#c1)">
<text x="94.00" y="232.90" font-size="8.3">Europe</text>
</g>
<g clip-path="url(#c2)">
<text x="220.50" y="232.90" font-size="8.3">Hungary</text>
</g>
<g clip-path="url(#c3)">
<text x="345.50" y="232.90" font-size="8.3">Clothes</text>
</g>
<g clip-path="url(#c4)">
<text x="425.20" y="232.90" font-size="8.3">Online</text>
</g>
<g clip-path="url(#c5)">
<text x="490.90" y="232.90" font-size="8.3">Medium</text>
</g>
<text x="607.20" y="232.90" font-size="8.3" text-anchor="end">10/11/2021</text>
<text x="662.20" y="232.90" font-size="8.3" text-anchor="end">2,407</text>
<text x="718.40" y="232.90" font-size="8.3" text-anchor="end">109.28</text>
<text x="763.80" y="232.90" font-size="8.3" text-anchor="end">35.</text>
<g clip-path="url(#c0)">
<text x="17.00" y="245.08" font-size="8.3">Cedrick Connor</text>
</g>
<g clip-path="url(#c1)">
<text x="94.00" y="245.08" font-size="8.3">Sub-Saharan Africa</text>
</g>
<g clip-path="url(#c2)">
<text x="220.50" y="245.08" font-size="8.3">Mauritania</text>
</g>
<g clip-path="url(#c3)">
<text x="345.50" y="245.08" font-size="8.3">Office Supplies</text>
</g>
<g clip-path="url(#c4)">
<text x="425.20" y="245.08" font-size="8.3">Offline</text>
</g>
<g clip-path="url(#c5)">
<text x="490.90" y="245.08" font-size="8.3">Low</text>
</g>
<text x="607.20" y="245.08" font-size="8.3" text-anchor="end">11/11/2021</text>
<text x="662.20" y="245.08" font-size="8.3" text-anchor="end">8,871</text>
<text x="718.40" y="245.08" font-size="8.3" text-anchor="end">651.21</text>
<text x="763.80" y="245.08" font-size="8.3" text-anchor="end">524.</text>
<g clip-path="url(#c0)">
<text x="17.00" y="257.26" font-size="8.3">Marvin Partridge</text>
</g>
<g clip-path="url(#c1)">
<text x="94.00" y="257.26" font-size="8.3">Europe</text>
</g>
<g clip-path="url(#c2)">
<text x="220.50" y="257.26" font-size="8.3">Switzerland</text>
</g>
<g clip-path="url(#c3)">
<text x="345.50" y="257.26" font-size="8.3">Vegetables</text>
</g>
<g clip-path="url(#c4)">
<text x="425.20" y="257.26" font-size="8.3">Online</text>
</g>
<g clip-path="url(#c5)">
<text x="490.90" y="257.26" font-size="8.3">Medium</text>
</g>
<text x="607.20" y="257.26" font-size="8.3" text-anchor="end">5/14/2021</text>
<text x="662.20" y="257.26" font-size="8.3" text-anchor="end">609</text>
<text x="718.40" y="257.26" font-size="8.3" text-anchor="end">154.06</text>
<text x="763.80" y="257.26" font-size="8.3" text-anchor="end">90.</text>
<g clip-path="url(#c0)">
<text x="17.00" y="269.44" font-size="8.3">Boris Webster</text>
</g>
<g clip-path="url(#c1)">
<text x="94.00" y="269.44" font-size="8.3">Sub-Saharan Africa</text>
</g>
<g clip-path="url(#c2)">
<text x="220.50" y="269.44" font-size="8.3">Ghana</text>
</g>
<g clip-path="url(#c3)">
<text x="345.50" y="269.44" font-size="8.3">Household</text>
</g>
<g clip-path="url(#c4)">
<text x="425.20" y="269.44" font-size="8.3">Online</text>
</g>
<g clip-path="url(#c5)">
<text x="490.90" y="269.44" font-size="8.3">Medium</text>
</g>
<text x="607.20" y="269.44" font-size="8.3" text-anchor="end">1/12/2021</text>
<text x="662.20" y="269.44" font-size="8.3" text-anchor="end">7,261</text>
<text x="718.40" y="269.44" font-size="8.3" text-anchor="end">668.27</text>
<text x="763.80" y="269.44" font-size="8.3" text-anchor="end">502.</text>
<g clip-path="url(#c0)">
<text x="17.00" y="281.62" font-size="8.3">Francesca Asher</text>
</g>
<g clip-path="url(#c1)">
<text x="94.00" y="281.62" font-size="8.3">Sub-Saharan Africa</text>
</g>
<g clip-path="url(#c2)">
<text x="220.50" y="281.62" font-size="8.3">Senegal</text>
</g>
<g clip-path="url(#c3)">
<text x="345.50" y="281.62" font-size="8.3">Beverages</text>
</g>
<g clip-path="url(#c4)">
<text x="425.20" y="281.62" font-size="8.3">Offline</text>
</g>
<g clip-path="url(#c5)">
<text x="490.90" y="281.62" font-size="8.3">Urgent</text>
</g>
<text x="607.20" y="281.62" font-size="8.3" text-anchor="end">10/25/2021</text>
<text x="662.20" y="281.62" font-size="8.3" text-anchor="end">4,947</text>
<text x="718.40" y="281.62" font-size="8.3" text-anchor="end">47.45</text>
<text x="763.80" y="281.62" font-size="8.3" text-anchor="end">31.</text>
<g clip-path="url(#c0)">
<text x="17.00" y="293.80" font-size="8.3">Emery Anderson</text>
</g>
<g clip-path="url(#c1)">
<text x="94.00" y="293.80" font-size="8.3">Sub-Saharan Africa</text>
</g>
<g clip-path="url(#c2)">
<text x="220.50" y="293.80" font-size="8.3">Zimbabwe</text>
</g>
<g clip-path="url(#c3)">
<text x="345.50" y="293.80" font-size="8.3">Beverages</text>
</g>
<g clip-path="url(#c4)">
<text x="425.20" y="293.80" font-size="8.3">Online</text>
</g>
<g clip-path="url(#c5)">
<text x="490.90" y="293.80" font-size="8.3">Medium</text>
</g>
<text x="607.20" y="293.80" font-size="8.3" text-anchor="end">3/17/2021</text>
<text x="662.20" y="293.80" font-size="8.3" text-anchor="end">3,213</text>
<text x="718.40" y="293.80" font-size="8.3" text-anchor="end">47.45</text>
<text x="763.80" y="293.80" font-size="8.3" text-anchor="end">31.</text>
<g clip-path="url(#c0)">
<text x="17.00" y="305.98" font-size="8.3">Regina Rees</text>
</g>
<g clip-path="url(#c1)">
<text x="94.00" y="305.98" font-size="8.3">Europe</text>
</g>
<g clip-path="url(#c2)">
<text x="220.50" y="305.98" font-size="8.3">Netherlands</text>
</g>
<g clip-path="url(#c3)">
<text x="345.50" y="305.98" font-size="8.3">Household</text>
</g>
<g clip-path="url(#c4)">
<text x="425.20" y="305.98" font-size="8.3">Offline</text>
</g>
<g clip-path="url(#c5)">
<text x="490.90" y="305.98" font-size="8.3">Medium</text>
</g>
<text x="607.20" y="305.98" font-size="8.3" text-anchor="end">5/19/2021</text>
<text x="662.20" y="305.98" font-size="8.3" text-anchor="end">7,224</text>
<text x="718.40" y="305.98" font-size="8.3" text-anchor="end">668.27</text>
<text x="763.80" y="305.98" font-size="8.3" text-anchor="end">502.</text>
<g clip-path="url(#c0)">
<text x="17.00" y="318.16" font-size="8.3">Alice Nash</text>
</g>
<g clip-path="url(#c1)">
<text x="94.00" y="318.16" font-size="8.3">Central America and the Caribbean</text>
</g>
<g clip-path="url(#c2)">
<text x="220.50" y="318.16" font-size="8.3">Honduras</text>
</g>
<g clip-path="url(#c3)">
<text x="345.50" y="318.16" font-size="8.3">Office Supplies</text>
</g>
<g clip-path="url(#c4)">
<text x="425.20" y="318.16" font-size="8.3">Online</text>
</g>
<g clip-path="url(#c5)">
<text x="490.90" y="318.16" font-size="8.3">Low</text>
</g>
<text x="607.20" y="318.16" font-size="8.3" text-anchor="end">6/18/2021</text>
<text x="662.20" y="318.16" font-size="8.3" text-anchor="end">1,895</text>
<text x="718.40" y="318.16" font-size="8.3" text-anchor="end">651.21</text>
<text x="763.80" y="318.16" font-size="8.3" text-anchor="end">524.</text>
<g clip-path="url(#c0)">
<text x="17.00" y="330.34" font-size="8.3">Margot Miller</text>
</g>
<g clip-path="url(#c1)">
<text x="94.00" y="330.34" font-size="8.3">Sub-Saharan Africa</text>
</g>
<g clip-path="url(#c2)">
<text x="220.50" y="330.34" font-size="8.3">Botswana</text>
</g>
<g clip-path="url(#c3)">
<text x="345.50" y="330.34" font-size="8.3">Snacks</text>
</g>
<g clip-path="url(#c4)">
<text x="425.20" y="330.34" font-size="8.3">Offline</text>
</g>
<g clip-path="url(#c5)">
<text x="490.90" y="330.34" font-size="8.3">Low</text>
</g>
<text x="607.20" y="330.34" font-size="8.3" text-anchor="end">7/18/2021</text>
<text x="662.20" y="330.34" font-size="8.3" text-anchor="end">3,424</text>
<text x="718.40" y="330.34" font-size="8.3" text-anchor="end">152.58</text>
<text x="763.80" y="330.34" font-size="8.3" text-anchor="end">97.</text>
<g clip-path="url(#c0)">
<text x="17.00" y="342.52" font-size="8.3">Rowan Lloyd</text>
</g>
<g clip-path="url(#c1)">
<text x="94.00" y="342.52" font-size="8.3">Australia and Oceania</text>
</g>
<g clip-path="url(#c2)">
<text x="220.50" y="342.52" font-size="8.3">Australia and Oceania</text>
</g>
<g clip-path="url(#c3)">
<text x="345.50" y="342.52" font-size="8.3">Meat</text>
</g>
<g clip-path="url(#c4)">
<text x="425.20" y="342.52" font-size="8.3">Online</text>
</g>
<g clip-path="url(#c5)">
<text x="490.90" y="342.52" font-size="8.3">Medium</text>
</g>
<text x="607.20" y="342.52" font-size="8.3" text-anchor="end">8/17/2021</text>
<text x="662.20" y="342.52" font-size="8.3" text-anchor="end">4,170</text>
<text x="718.40" y="342.52" font-size="8.3" text-anchor="end">421.89</text>
<text x="763.80" y="342.52" font-size="8.3" text-anchor="end">364.</text>
<g clip-path="url(#c0)">
<text x="17.00" y="354.70" font-size="8.3">Rosie Mason</text>
</g>
<g clip-path="url(#c1)">
<text x="94.00" y="354.70" font-size="8.3">Europe</text>
</g>
<g clip-path="url(#c2)">
<text x="220.50" y="354.70" font-size="8.3">United Kingdom</text>
</g>
<g clip-path="url(#c3)">
<text x="345.50" y="354.70" font-size="8.3">Meat</text>
</g>
<g clip-path="url(#c4)">
<text x="425.20" y="354.70" font-size="8.3">Online</text>
</g>
<g clip-path="url(#c5)">
<text x="490.90" y="354.70" font-size="8.3">High</text>
</g>
<text x="607.20" y="354.70" font-size="8.3" text-anchor="end">12/29/2021</text>
<text x="662.20" y="354.70" font-size="8.3" text-anchor="end">3,908</text>
<text x="718.40" y="354.70" font-size="8.3" text-anchor="end">421.89</text>
<text x="763.80" y="354.70" font-size="8.3" text-anchor="end">364.</text>
<g clip-path="url(#c0)">
<text x="17.00" y="366.88" font-size="8.3">Angel Jarvis</text>
</g>
<g clip-path="url(#c1)">
<text x="94.00" y="366.88" font-size="8.3">Europe</text>
</g>
<g clip-path="url(#c2)">
<text x="220.50" y="366.88" font-size="8.3">Bulgaria</text>
</g>
<g clip-path="url(#c3)">
<text x="345.50" y="366.88" font-size="8.3">Fruits</text>
</g>
<g clip-path="url(#c4)">
<text x="425.20" y="366.88" font-size="8.3">Offline</text>
</g>
<g clip-path="url(#c5)">
<text x="490.90" y="366.88" font-size="8.3">Low</text>
</g>
<text x="607.20" y="366.88" font-size="8.3" text-anchor="end">10/20/2021</text>
<text x="662.20" y="366.88" font-size="8.3" text-anchor="end">1,337</text>
<text x="718.40" y="366.88" font-size="8.3" text-anchor="end">9.33</text>
<text x="763.80" y="366.88" font-size="8.3" text-anchor="end">6.</text>
<g clip-path="url(#c0)">
<text x="17.00" y="379.06" font-size="8.3">Chris Gray</text>
</g>
<g clip-path="url(#c1)">
<text x="94.00" y="379.06" font-size="8.3">Europe</text>
</g>
<g clip-path="url(#c2)">
<text x="220.50" y="379.06" font-size="8.3">Lithuania</text>
</g>
<g clip-path="url(#c3)">
<text x="345.50" y="379.06" font-size="8.3">Fruits</text>
</g>
<g clip-path="url(#c4)">
<text x="425.20" y="379.06" font-size="8.3">Online</text>
</g>
<g clip-path="url(#c5)">
<text x="490.90" y="379.06" font-size="8.3">Low</text>
</g>
<text x="607.20" y="379.06" font-size="8.3" text-anchor="end">2/1/2021</text>
<text x="662.20" y="379.06" font-size="8.3" text-anchor="end">9,708</text>
<text x="718.40" y="379.06" font-size="8.3" text-anchor="end">9.33</text>
<text x="763.80" y="379.06" font-size="8.3" text-anchor="end">6.</text>
<g clip-path="url(#c0)">
<text x="17.00" y="391.24" font-size="8.3">Elise Osmond</text>
</g>
<g clip-path="url(#c1)">
<text x="94.00" y="391.24" font-size="8.3">Asia</text>
</g>
<g clip-path="url(#c2)">
<text x="220.50" y="391.24" font-size="8.3">Myanmar</text>
</g>
<g clip-path="url(#c3)">
<text x="345.50" y="391.24" font-size="8.3">Meat</text>
</g>
<g clip-path="url(#c4)">
<text x="425.20" y="391.24" font-size="8.3">Online</text>
</g>
<g clip-path="url(#c5)">
<text x="490.90" y="391.24" font-size="8.3">High</text>
</g>
<text x="607.20" y="391.24" font-size="8.3" text-anchor="end">9/6/2021</text>
<text x="662.20" y="391.24" font-size="8.3" text-anchor="end">4,908</text>
<text x="718.40" y="391.24" font-size="8.3" text-anchor="end">421.89</text>
<text x="763.80" y="391.24" font-size="8.3" text-anchor="end">364.</text>
<g clip-path="url(#c0)">
<text x="17.00" y="403.42" font-size="8.3">Jackeline Ingham</text>
</g>
<g clip-path="url(#c1)">
<text x="94.00" y="403.42" font-size="8.3">Europe</text>
</g>
<g clip-path="url(#c2)">
<text x="220.50" y="403.42" font-size="8.3">Albania</text>
</g>
<g clip-path="url(#c3)">
<text x="345.50" y="403.42" font-size="8.3">Beverages</text>
</g>
<g clip-path="url(#c4)">
<text x="425.20" y="403.42" font-size="8.3">Online</text>
</g>
<g clip-path="url(#c5)">
<text x="490.90" y="403.42" font-size="8.3">Urgent</text>
</g>
<text x="607.20" y="403.42" font-size="8.3" text-anchor="end">1/13/2021</text>
<text x="662.20" y="403.42" font-size="8.3" text-anchor="end">1,839</text>
<text x="718.40" y="403.42" font-size="8.3" text-anchor="end">47.45</text>
<text x="763.80" y="403.42" font-size="8.3" text-anchor="end">31.</text>
<g clip-path="url(#c0)">
<text x="17.00" y="415.60" font-size="8.3">Hope Needham</text>
</g>
<g clip-path="url(#c1)">
<text x="94.00" y="415.60" font-size="8.3">Europe</text>
</g>
<g clip-path="url(#c2)">
<text x="220.50" y="415.60" font-size="8.3">Denmark</text>
</g>
<g clip-path="url(#c3)">
<text x="345.50" y="415.60" font-size="8.3">Beverages</text>
</g>
<g clip-path="url(#c4)">
<text x="425.20" y="415.60" font-size="8.3">Offline</text>
</g>
<g clip-path="url(#c5)">
<text x="490.90" y="415.60" font-size="8.3">Urgent</text>
</g>
<text x="607.20" y="415.60" font-size="8.3" text-anchor="end">1/21/2021</text>
<text x="662.20" y="415.60" font-size="8.3" text-anchor="end">400</text>
<text x="718.40" y="415.60" font-size="8.3" text-anchor="end">47.45</text>
<text x="763.80" y="415.60" font-size="8.3" text-anchor="end">31.</text>
<g clip-path="url(#c0)">
<text x="17.00" y="427.78" font-size="8.3">Jacob Jennson</text>
</g>
<g clip-path="url(#c1)">
<text x="94.00" y="427.78" font-size="8.3">Australia and Oceania</text>
</g>
<g clip-path="url(#c2)">
<text x="220.50" y="427.78" font-size="8.3">Nauru</text>
</g>
<g clip-path="url(#c3)">
<text x="345.50" y="427.78" font-size="8.3">Personal Care</text>
</g>
<g clip-path="url(#c4)">
<text x="425.20" y="427.78" font-size="8.3">Online</text>
</g>
<g clip-path="url(#c5)">
<text x="490.90" y="427.78" font-size="8.3">High</text>
</g>
<text x="607.20" y="427.78" font-size="8.3" text-anchor="end">11/16/2021</text>
<text x="662.20" y="427.78" font-size="8.3" text-anchor="end">1,914</text>
<text x="718.40" y="427.78" font-size="8.3" text-anchor="end">81.73</text>
<text x="763.80" y="427.78" font-size="8.3" text-anchor="end">56.</text>
<g clip-path="url(#c0)">
<text x="17.00" y="439.96" font-size="8.3">Michael Ebden</text>
</g>
<g clip-path="url(#c1)">
<text x="94.00" y="439.96" font-size="8.3">Central America and the Caribbean</text>
</g>
<g clip-path="url(#c2)">
<text x="220.50" y="439.96" font-size="8.3">Guatemala</text>
</g>
<g clip-path="url(#c3)">
<text x="345.50" y="439.96" font-size="8.3">Personal Care</text>
</g>
<g clip-path="url(#c4)">
<text x="425.20" y="439.96" font-size="8.3">Online</text>
</g>
<g clip-path="url(#c5)">
<text x="490.90" y="439.96" font-size="8.3">Urgent</text>
</g>
<text x="607.20" y="439.96" font-size="8.3" text-anchor="end">9/16/2021</text>
<text x="662.20" y="439.96" font-size="8.3" text-anchor="end">7,989</text>
<text x="718.40" y="439.96" font-size="8.3" text-anchor="end">81.73</text>
<text x="763.80" y="439.96" font-size="8.3" text-anchor="end">56.</text>
<g clip-path="url(#c0)">
<text x="17.00" y="452.14" font-size="8.3">Rosa Buckley</text>
</g>
<g clip-path="url(#c1)">
<text x="94.00" y="452.14" font-size="8.3">Asia</text>
</g>
<g clip-path="url(#c2)">
<text x="220.50" y="452.14" font-size="8.3">Kyrgyzstan</text>
</g>
<g clip-path="url(#c3)">
<text x="345.50" y="452.14" font-size="8.3">Meat</text>
</g>
<g clip-path="url(#c4)">
<text x="425.20" y="452.14" font-size="8.3">Offline</text>
</g>
<g clip-path="url(#c5)">
<text x="490.90" y="452.14" font-size="8.3">High</text>
</g>
<text x="607.20" y="452.14" font-size="8.3" text-anchor="end">4/11/2021</text>
<text x="662.20" y="452.14" font-size="8.3" text-anchor="end">3,772</text>
<text x="718.40" y="452.14" font-size="8.3" text-anchor="end">421.89</text>
<text x="763.80" y="452.14" font-size="8.3" text-anchor="end">364.</text>
<g clip-path="url(#c0)">
<text x="17.00" y="464.32" font-size="8.3">Eduardo Butler</text>
</g>
<g clip-path="url(#c1)">
<text x="94.00" y="464.32" font-size="8.3">Sub-Saharan Africa</text>
</g>
<g clip-path="url(#c2)">
<text x="220.50" y="464.32" font-size="8.3">Ghana</text>
</g>
<g clip-path="url(#c3)">
<text x="345.50" y="464.32" font-size="8.3">Cosmetics</text>
</g>
<g clip-path="url(#c4)">
<text x="425.20" y="464.32" font-size="8.3">Offline</text>
</g>
<g clip-path="url(#c5)">
<text x="490.90" y="464.32" font-size="8.3">Medium</text>
</g>
<text x="607.20" y="464.32" font-size="8.3" text-anchor="end">6/12/2021</text>
<text x="662.20" y="464.32" font-size="8.3" text-anchor="end">7,845</text>
<text x="718.40" y="464.32" font-size="8.3" text-anchor="end">437.20</text>
<text x="763.80" y="464.32" font-size="8.3" text-anchor="end">263.</text>
<g clip-path="url(#c0)">
<text x="17.00" y="476.50" font-size="8.3">Kieth Martin</text>
</g>
<g clip-path="url(#c1)">
<text x="94.00" y="476.50" font-size="8.3">Sub-Saharan Africa</text>
</g>
<g clip-path="url(#c2)">
<text x="220.50" y="476.50" font-size="8.3">Comoros</text>
</g>
<g clip-path="url(#c3)">
<text x="345.50" y="476.50" font-size="8.3">Meat</text>
</g>
<g clip-path="url(#c4)">
<text x="425.20" y="476.50" font-size="8.3">Offline</text>
</g>
<g clip-path="url(#c5)">
<text x="490.90" y="476.50" font-size="8.3">High</text>
</g>
<text x="607.20" y="476.50" font-size="8.3" text-anchor="end">8/3/2021</text>
<text x="662.20" y="476.50" font-size="8.3" text-anchor="end">3,772</text>
<text x="718.40" y="476.50" font-size="8.3" text-anchor="end">421.89</text>
<text x="763.80" y="476.50" font-size="8.3" text-anchor="end">364.</text>
<g clip-path="url(#c0)">
<text x="17.00" y="488.68" font-size="8.3">Meredith Addis</text>
</g>
<g clip-path="url(#c1)">
<text x="94.00" y="488.68" font-size="8.3">Sub-Saharan Africa</text>
</g>
<g clip-path="url(#c2)">
<text x="220.50" y="488.68" font-size="8.3">Comoros</text>
</g>
<g clip-path="url(#c3)">
<text x="345.50" y="488.68" font-size="8.3">Household</text>
</g>
<g clip-path="url(#c4)">
<text x="425.20" y="488.68" font-size="8.3">Online</text>
</g>
<g clip-path="url(#c5)">
<text x="490.90" y="488.68" font-size="8.3">Low</text>
</g>
<text x="607.20" y="488.68" font-size="8.3" text-anchor="end">5/29/2021</text>
<text x="662.20" y="488.68" font-size="8.3" text-anchor="end">8,016</text>
<text x="718.40" y="488.68" font-size="8.3" text-anchor="end">668.27</text>
<text x="763.80" y="488.68" font-size="8.3" text-anchor="end">502.</text>
<g clip-path="url(#c0)">
<text x="17.00" y="500.86" font-size="8.3">Nancy Bradshaw</text>
</g>
<g clip-path="url(#c1)">
<text x="94.00" y="500.86" font-size="8.3">Europe</text>
</g>
<g clip-path="url(#c2)">
<text x="220.50" y="500.86" font-size="8.3">Cyprus</text>
</g>
<g clip-path="url(#c3)">
<text x="345.50" y="500.86" font-size="8.3">Vegetables</text>
</g>
<g clip-path="url(#c4)">
<text x="425.20" y="500.86" font-size="8.3">Offline</text>
</g>
<g clip-path="url(#c5)">
<text x="490.90" y="500.86" font-size="8.3">Low</text>
</g>
<text x="607.20" y="500.86" font-size="8.3" text-anchor="end">10/28/2021</text>
<text x="662.20" y="500.86" font-size="8.3" text-anchor="end">5,619</text>
<text x="718.40" y="500.86" font-size="8.3" text-anchor="end">154.06</text>
<text x="763.80" y="500.86" font-size="8.3" text-anchor="end">90.</text>
<g clip-path="url(#c0)">
<text x="17.00" y="513.04" font-size="8.3">Aileen Farrant</text>
</g>
<g clip-path="url(#c1)">
<text x="94.00" y="513.04" font-size="8.3">Asia</text>
</g>
<g clip-path="url(#c2)">
<text x="220.50" y="513.04" font-size="8.3">Thailand</text>
</g>
<g clip-path="url(#c3)">
<text x="345.50" y="513.04" font-size="8.3">Snacks</text>
</g>
<g clip-path="url(#c4)">
<text x="425.20" y="513.04" font-size="8.3">Offline</text>
</g>
<g clip-path="url(#c5)">
<text x="490.90" y="513.04" font-size="8.3">Low</text>
</g>
<text x="607.20" y="513.04" font-size="8.3" text-anchor="end">9/8/2021</text>
<text x="662.20" y="513.04" font-size="8.3" text-anchor="end">1,999</text>
<text x="718.40" y="513.04" font-size="8.3" text-anchor="end">152.58</text>
<text x="763.80" y="513.04" font-size="8.3" text-anchor="end">97.</text>
<g clip-path="url(#c0)">
<text x="17.00" y="525.22" font-size="8.3">Leilani Wilkinson</text>
</g>
<g clip-path="url(#c1)">
<text x="94.00" y="525.22" font-size="8.3">Sub-Saharan Africa</text>
</g>
<g clip-path="url(#c2)">
<text x="220.50" y="525.22" font-size="8.3">The Gambia</text>
</g>
<g clip-path="url(#c3)">
<text x="345.50" y="525.22" font-size="8.3">Clothes</text>
</g>
<g clip-path="url(#c4)">
<text x="425.20" y="525.22" font-size="8.3">Offline</text>
</g>
<g clip-path="url(#c5)">
<text x="490.90" y="525.22" font-size="8.3">Low</text>
</g>
<text x="607.20" y="525.22" font-size="8.3" text-anchor="end">4/26/2021</text>
<text x="662.20" y="525.22" font-size="8.3" text-anchor="end">5,033</text>
<text x="718.40" y="525.22" font-size="8.3" text-anchor="end">109.28</text>
<text x="763.80" y="525.22" font-size="8.3" text-anchor="end">35.</text>
<rect x="764.20" y="103.00" width="3.80" height="424.72" fill="#f0f0f0"/>
<rect x="344.0" y="332.84000000000003" width="79.69999999999999" height="12.17999999999995" fill="none" stroke="#1e7145" stroke-width="1.1"/>
<rect x="422.50" y="343.82" width="2.40" height="2.40" fill="#1e7145"/>
<rect x="4.1" y="112.4" width="762.9" height="14.7" fill="none" stroke="#fb4146" stroke-width="2"/>
<rect x="0.00" y="528.02" width="768.00" height="19.28" fill="#e5e6e8"/>
<path d="M21.3 535l-3 2.8 3 2.8M37.2 535l3 2.8-3 2.8" fill="none" stroke="#a8a8a8" stroke-width="0.9"/>
<path d="M70.8 528h27.5v14.3a2.5 2.5 0 0 1-2.5 2.5h-22.5a2.5 2.5 0 0 1-2.5-2.5z" fill="#ffffff"/>
<text x="75.70" y="539.60" font-size="8.4" fill="#1f1f1f" textLength="18.20" lengthAdjust="spacingAndGlyphs" stroke="#1f1f1f" stroke-width="0.3">Data</text>
<rect x="75.80" y="541.90" width="18.40" height="1.90" fill="#3d8f60" rx="0.9"/>
<line x1="102.20" y1="532.00" x2="102.20" y2="543.00" stroke="#cfcfcf" stroke-width="0.8"/>
<text x="108.70" y="540.60" font-size="8.3" fill="#333" textLength="27.10" lengthAdjust="spacingAndGlyphs">Output</text>
<line x1="145.00" y1="532.00" x2="145.00" y2="543.00" stroke="#cfcfcf" stroke-width="0.8"/>
<path d="M173.6 534.4v6.6M170.2 537.7h6.8" stroke="#444" stroke-width="0.9"/>
<rect x="467.40" y="535.60" width="1.00" height="1.00" fill="#666"/>
<rect x="467.40" y="538.00" width="1.00" height="1.00" fill="#666"/>
<rect x="467.40" y="540.40" width="1.00" height="1.00" fill="#666"/>
<rect x="478.30" y="533.30" width="287.00" height="10.40" fill="#ffffff" rx="5.2"/>
<path d="M485.2 535.2v5.6l-3.4-2.8z" fill="#666"/><path d="M758.4 535.2v5.6l3.4-2.8z" fill="#666"/>
<rect x="488.00" y="535.50" width="226.30" height="5.00" fill="#767676" rx="2.5"/>
<rect x="0.00" y="547.30" width="768.00" height="12.70" fill="#f3f3f3"/>
<rect x="0.00" y="555.00" width="1.20" height="5.00" fill="#2e8b57"/>
<text x="7.30" y="557.10" font-size="8" fill="#333" textLength="19.60" lengthAdjust="spacingAndGlyphs">Ready</text>
<text x="35.30" y="557.10" font-size="8" fill="#333" textLength="63.20" lengthAdjust="spacingAndGlyphs">Workbook Statistics</text>
<rect x="110.5" y="551" width="8" height="7" fill="none" stroke="#444" stroke-width="0.8"/><circle cx="115.2" cy="555.3" r="1.8" fill="none" stroke="#444" stroke-width="0.8"/>
<path d="M131 551.5l2 1.5 3-1M133 553v3l-2 2M133 556l3 2M136.5 556l2 1.5" fill="none" stroke="#444" stroke-width="0.8"/>
<text x="140.60" y="557.30" font-size="8" fill="#333" textLength="77.40" lengthAdjust="spacingAndGlyphs">Accessibility: Good to go</text>
<rect x="588.00" y="547.00" width="24.00" height="13.00" fill="#dcdcdc"/>
<path d="M594.5 550.5h10v7h-10zM594.5 552.8h10M594.5 555.2h10M597.8 550.5v7M601.2 550.5v7" fill="none" stroke="#444" stroke-width="0.8"/>
<path d="M620.3 550.3h8.2v7h-8.2zM622.3 550.3v7M626.5 550.3v7" fill="none" stroke="#555" stroke-width="0.8"/>
<path d="M644 550.3h8.5v7h-8.5zM646.5 550.3v3h3.5v-3" fill="none" stroke="#555" stroke-width="0.8"/>
<line x1="664.70" y1="554.10" x2="668.40" y2="554.10" stroke="#555" stroke-width="0.8"/>
<line x1="672.60" y1="554.10" x2="733.00" y2="554.10" stroke="#9a9a9a" stroke-width="0.8"/>
<rect x="701.80" y="550.00" width="3.00" height="8.00" fill="#555" rx="0.8"/>
<path d="M738.3 551.5v5.2M735.7 554.1h5.2" stroke="#555" stroke-width="0.8"/>
<text x="749.60" y="557.30" font-size="7.8" fill="#333" textLength="15.90" lengthAdjust="spacingAndGlyphs">100%</text>
</svg></body></html>
